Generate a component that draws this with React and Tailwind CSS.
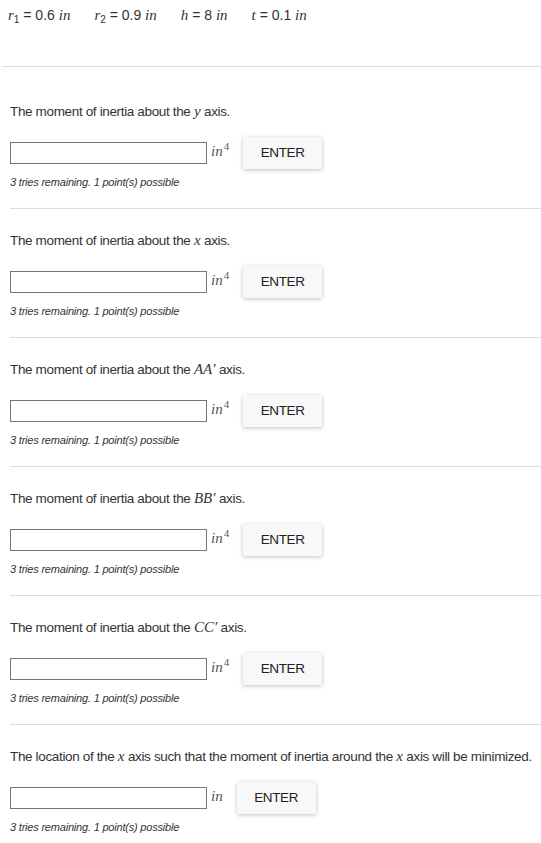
import React from "react";

const M = ({ children, className = "" }) => (
  <span className={`italic text-[15px] tracking-normal leading-none ${className}`} style={{ fontFamily: '"Liberation Serif", "DejaVu Serif", serif' }}>
    {children}
  </span>
);

function Section({ question, unit, first, last }) {
  return (
    <div className={`${first ? "pt-[35px]" : "border-t border-[#dddddd] pt-[22px]"} ${last ? "pb-[10px]" : "pb-[19px]"}`}>
      <p className="h-[20px] overflow-visible text-[13.5px] tracking-[-0.35px] leading-[20px] text-[#333333] whitespace-nowrap">{question}</p>
      <div className="flex items-center mt-[15px] h-[32px]">
        <input type="text" className="w-[197px] h-[22px] border border-[#767676] bg-white outline-none" />
        <span className="ml-[4px] text-[#555] leading-none relative top-[-2px]">
          {unit === "in4" ? (
            <M>
              in<span className="not-italic text-[11px] relative top-[-6px] ml-[1px]">4</span>
            </M>
          ) : (
            <M>in</M>
          )}
        </span>
        <button className="ml-[14px] w-[79px] h-[32px] bg-[#f8f8f8] rounded-[2px] shadow-[0_1px_4px_rgba(0,0,0,0.25)] text-[13.5px] tracking-[-0.35px] text-[#222]">
          ENTER
        </button>
      </div>
      <p className="mt-[6px] h-[14px] text-[11px] tracking-[-0.2px] leading-[14px] italic text-[#333333]">3 tries remaining. 1 point(s) possible</p>
    </div>
  );
}

export default function App() {
  const sections = [
    { q: <>The moment of inertia about the <M>y</M> axis.</>, unit: "in4" },
    { q: <>The moment of inertia about the <M>x</M> axis.</>, unit: "in4" },
    { q: <>The moment of inertia about the <M>AA′</M> axis.</>, unit: "in4" },
    { q: <>The moment of inertia about the <M>BB′</M> axis.</>, unit: "in4" },
    { q: <>The moment of inertia about the <M>CC′</M> axis.</>, unit: "in4" },
    {
      q: (
        <>
          The location of the <M>x</M> axis such that the moment of inertia around the <M>x</M> axis will be minimized.
        </>
      ),
      unit: "in",
    },
  ];
  return (
    <div className="w-[541px] bg-white text-[#333]" style={{ fontFamily: '"Liberation Sans", Arial, sans-serif' }}>
      <div className="flex items-center h-[30px] pl-[8px] text-[14px] text-[#333] whitespace-nowrap">
        <span>
          <M>r</M><span className="text-[10px] relative top-[3px]">1</span> = 0.6 <M>in</M>
        </span>
        <span className="ml-[24px]">
          <M>r</M><span className="text-[10px] relative top-[3px]">2</span> = 0.9 <M>in</M>
        </span>
        <span className="ml-[24px]">
          <M>h</M> = 8 <M>in</M>
        </span>
        <span className="ml-[24px]">
          <M>t</M> = 0.1 <M>in</M>
        </span>
      </div>
      <div className="h-[36px]" />
      <div className="ml-[2px] border-t border-[#dddddd]" />
      <div className="ml-[10px]">
        {sections.map((s, i) => (
          <Section key={i} question={s.q} unit={s.unit} first={i === 0} last={i === sections.length - 1} />
        ))}
      </div>
    </div>
  );
}
